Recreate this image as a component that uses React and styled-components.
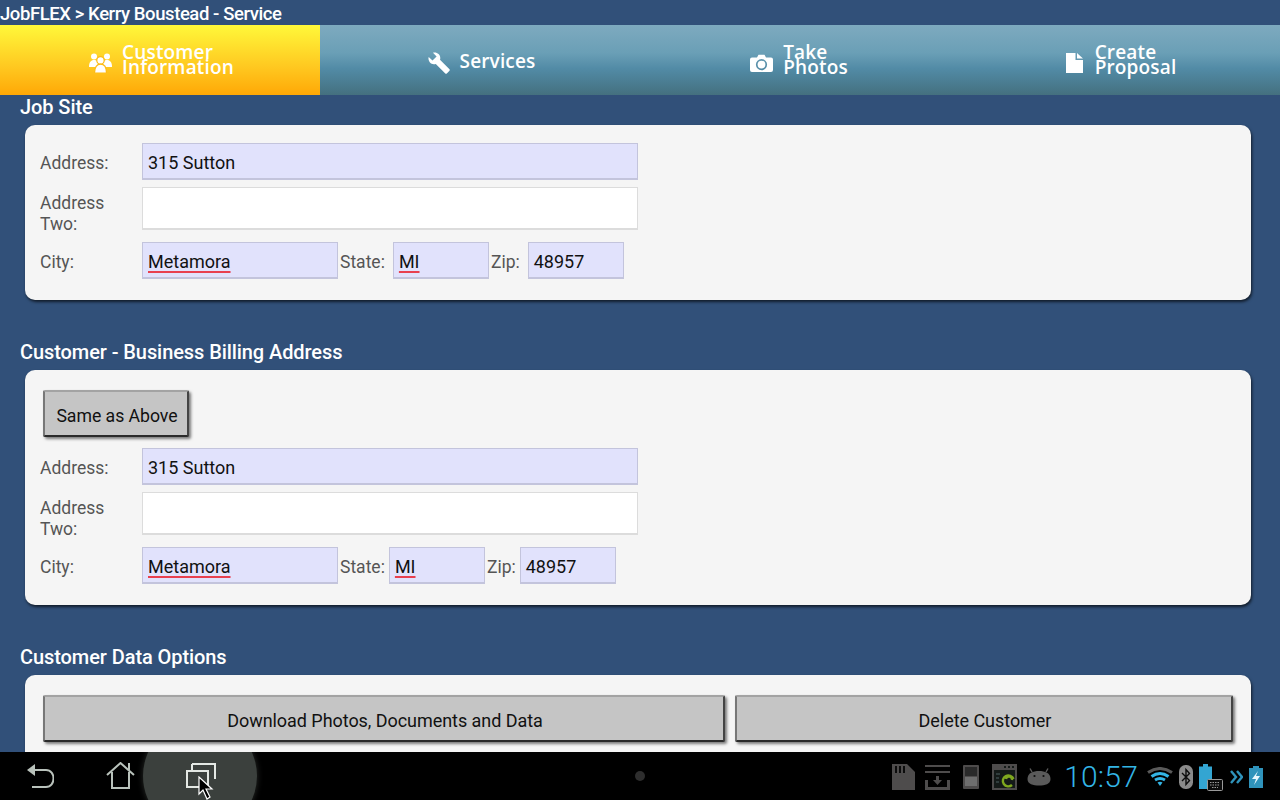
import React from "react";
import styled, { createGlobalStyle } from "styled-components";

const Global = createGlobalStyle`
  html, body { margin: 0; padding: 0; background: #315079; }
  * { box-sizing: border-box; }
`;

const Page = styled.div`
  width: 1280px;
  height: 800px;
  display: flex;
  flex-direction: column;
  overflow: hidden;
  background: #315079;
  font-family: Roboto, "Liberation Sans", sans-serif;
`;

const TitleBar = styled.div`
  height: 25px;
  flex: none;
  color: #fff;
  font-size: 18.5px;
  font-weight: 500;
  line-height: 28px;
  letter-spacing: -0.42px;
  white-space: nowrap;
`;

const Tabs = styled.div`
  height: 70px;
  flex: none;
  display: grid;
  grid-template-columns: repeat(4, 320px);
`;

const Tab = styled.div`
  display: flex;
  align-items: center;
  justify-content: center;
  gap: ${(p) => p.$gap || 10}px;
  padding: 0 ${(p) => p.$padRight || 0}px 0 ${(p) => p.$padLeft || 0}px;
  color: #fff;
  font-family: "Open Sans", "DejaVu Sans", sans-serif;
  font-size: 19px;
  font-weight: 600;
  line-height: 15px;
  letter-spacing: 0.15px;
  background: ${(p) =>
    p.$active
      ? "linear-gradient(#fff83a, #ffc820 60%, #ffa806)"
      : "linear-gradient(#7eaabf, #6a9fb6 40%, #528ba6 62%, #44707f)"};
  svg { flex: none; margin-top: 6px; }
`;

const TabLabel = styled.span`
  white-space: pre-line;
  padding-top: ${(p) => (p.$two ? 0 : 2)}px;
`;

const Content = styled.div`
  flex: 1;
  min-height: 0;
  overflow: hidden;
  padding: 0 29px 0 25px;
`;

const SectionTitle = styled.h2`
  margin: 0 0 0 -5px;
  height: 30px;
  color: #fff;
  font-size: 20px;
  font-weight: 500;
  line-height: 25px;
  letter-spacing: -0.08px;
`;

const Card = styled.div`
  background: #f5f5f5;
  border-radius: 10px;
  padding: 18px 18px 21px 15px;
  box-shadow: 1px 2px 3px rgba(0, 0, 0, 0.65);
  margin-bottom: ${(p) => p.$bottom || 0}px;
`;

const Row = styled.div`
  display: flex;
  align-items: center;
  height: ${(p) => p.$height || 37}px;
  margin-bottom: ${(p) => p.$bottom || 0}px;
`;

const Label = styled.div`
  color: #555;
  font-size: 17.5px;
  line-height: 21px;
  flex: none;
  padding-top: ${(p) => p.$top ?? 4}px;
  width: ${(p) => p.$width || "auto"};
  margin-right: ${(p) => p.$right || 0}px;
`;

const Field = styled.div`
  flex: none;
  width: ${(p) => p.$width}px;
  height: ${(p) => p.$height || 37}px;
  margin-right: ${(p) => p.$right || 0}px;
  padding-left: 5px;
  background: ${(p) => (p.$empty ? "#fff" : "#e1e2fc")};
  border: 1px solid ${(p) => (p.$empty ? "#dcdcdc" : "#c3c4dc")};
  border-bottom-width: 2px;
  color: #111;
  font-size: 18px;
  line-height: 37px;
`;

const Misspelled = styled.span`
  text-decoration: underline #e8404f 2px;
  text-underline-offset: 3px;
  text-decoration-skip-ink: none;
`;

const GreyButton = styled.div`
  height: 47px;
  width: ${(p) => p.$width}px;
  flex: none;
  display: flex;
  align-items: center;
  justify-content: center;
  padding: 4px 0 0 2px;
  background: #c5c5c5;
  border: 2px solid #a5a5a5;
  border-color: #a3a3a3 #444 #2a2a2a #777;
  border-radius: 2px;
  box-shadow: 2px 2px 3px rgba(0, 0, 0, 0.5);
  color: #111;
  font-size: ${(p) => p.$size || 18}px;
  letter-spacing: -0.05px;
`;

const ButtonRow = styled.div`
  display: flex;
  gap: 10px;
  margin: 2px 0 0 3px;
`;

const SameRow = styled.div`
  margin: 2px 0 11px 3px;
`;

const NavBar = styled.div`
  position: relative;
  height: 48px;
  flex: none;
  display: flex;
  align-items: center;
  background: #000;
  overflow: hidden;
`;

const Glow = styled.div`
  position: absolute;
  left: 143px;
  top: -33px;
  width: 114px;
  height: 114px;
  border-radius: 50%;
  background: #3b403d;
  box-shadow: 0 0 6px #2a2d2b;
`;

const NavButtons = styled.div`
  position: relative;
  display: flex;
  align-items: center;
  padding-left: 27px;
  svg { display: block; flex: none; }
`;

const NavGap = styled.div`
  width: ${(p) => p.$w}px;
  flex: none;
`;

const Dot = styled.div`
  position: absolute;
  left: 635px;
  top: 19px;
  width: 10px;
  height: 10px;
  border-radius: 50%;
  background: #2e2e2e;
`;

const Tray = styled.div`
  margin-left: auto;
  display: flex;
  align-items: center;
  height: 100%;
  padding: 2px 17px 0 0;
  svg { display: block; flex: none; }
`;

const Clock = styled.span`
  color: #33b5e5;
  font-size: 30px;
  font-weight: 300;
  letter-spacing: 0.2px;
  line-height: 46px;
  margin: 0 9px 0 13px;
`;

const Cursor = styled.svg`
  position: absolute;
  left: 198px;
  top: 24px;
`;

const UsersIcon = () => (
  <svg width="23" height="20" viewBox="0 0 23 20" fill="#fff">
    <circle cx="5" cy="3.4" r="3" />
    <path d="M0 14 C0 9 2 7 5 7 C8 7 10 9 10 14 Z" />
    <circle cx="18" cy="3.4" r="3" />
    <path d="M13 14 C13 9 15 7 18 7 C21 7 23 9 23 14 Z" />
    <g stroke="#fdbb16" strokeWidth="1.2">
      <circle cx="11.5" cy="7.4" r="3.7" />
      <path d="M5.5 20 C5.5 14 8 11.2 11.5 11.2 C15 11.2 17.5 14 17.5 20 Z" />
    </g>
  </svg>
);

const WrenchIcon = () => (
  <svg width="22" height="22" viewBox="0 0 22 22" fill="#fff">
    <path d="M5 0.7 C9 -0.5 13.5 3 12 7.8 L21.5 17.3 Q22 18 21.5 18.7 L18.8 21.4 Q18 22 17.3 21.4 L7.8 12 C3 13.5 -0.5 9 0.7 5 L4.5 8.6 L8.6 4.5 Z" />
  </svg>
);

const CameraIcon = () => (
  <svg width="23" height="18" viewBox="0 0 23 18" fill="#fff">
    <path
      fillRule="evenodd"
      d="M2 3.5 H7 L8.5 0.7 H14.5 L16 3.5 H21 Q23 3.5 23 5.5 V16 Q23 18 21 18 H2 Q0 18 0 16 V5.5 Q0 3.5 2 3.5 Z M11.5 5 A5.6 5.6 0 1 0 11.5 16.2 A5.6 5.6 0 1 0 11.5 5 Z"
    />
    <circle cx="11.5" cy="10.6" r="3.9" />
  </svg>
);

const FileIcon = () => (
  <svg width="17" height="20" viewBox="0 0 17 20" fill="#fff">
    <path d="M0 0 H9.5 V7 H17 V20 H0 Z" />
    <path d="M11 0 L17 5.6 H11 Z" />
  </svg>
);

const BackIcon = () => (
  <svg width="27" height="26" viewBox="0 0 27 26" fill="none">
    <path d="M0 7 L8 1 V13 Z" fill="#b9c2bb" />
    <path d="M7 7 H19 C29 7 29 24 19 24 H5" stroke="#b9c2bb" strokeWidth="2" />
  </svg>
);

const HomeIcon = () => (
  <svg width="29" height="28" viewBox="0 0 29 28" fill="none" stroke="#b9c2bb" strokeWidth="2">
    <path d="M1 13 L14.5 1 L28 13" />
    <path d="M6 10 V26 H23 V10" />
    <path d="M23 1 V8" />
  </svg>
);

const RecentsIcon = () => (
  <svg width="30" height="26" viewBox="0 0 30 26" fill="none" stroke="#e4e8e4" strokeWidth="2">
    <path d="M6 1 H29 V16 M6 1 V7" />
    <rect x="1" y="8" width="21" height="16" />
  </svg>
);

const SdIcon = () => (
  <svg width="23" height="26" viewBox="0 0 23 26" fill="#4e4c4c">
    <path d="M0 0 H15 L23 8 V26 H0 Z" />
    <path d="M3 2 H5 V9 H3 Z M7 2 H9 V9 H7 Z M11 2 H13 V9 H11 Z" fill="#0c0c0c" />
  </svg>
);

const DownloadIcon = () => (
  <svg width="25" height="26" viewBox="0 0 25 26" fill="none" stroke="#4e4c4c">
    <path d="M0 2 H25 M0 8 H25" strokeWidth="2" />
    <path d="M1.5 16 V24.5 H23.5 V16" strokeWidth="3" />
    <path d="M12.5 12 V18" strokeWidth="3" />
    <path d="M8 16 H17 L12.5 21 Z" fill="#4e4c4c" stroke="none" />
  </svg>
);

const PhoneIcon = () => (
  <svg width="16" height="24" viewBox="0 0 16 24">
    <rect x="0" y="0" width="16" height="24" rx="1" fill="#4e4c4c" />
    <rect x="2" y="2" width="12" height="9" fill="#2a2a2a" />
    <rect x="2" y="12" width="12" height="9" fill="#6e6e6e" />
  </svg>
);

const AppThumbIcon = () => (
  <svg width="25" height="26" viewBox="0 0 25 26" fill="none">
    <rect x="0" y="0" width="25" height="26" fill="#4e4c4c" />
    <rect x="2" y="6" width="21" height="18" fill="#141a18" />
    <path d="M21.5 15 A5.5 5.5 0 1 0 20 21 M14 15 A3 3 0 0 1 20 16" stroke="#7fa81f" strokeWidth="2.4" />
    <path d="M4 10 H8 M4 14 H7 M4 18 H7" stroke="#3a4a4a" strokeWidth="1.5" />
    <path d="M12 3 H14 M16 3 H18 M20 3 H22" stroke="#141a18" strokeWidth="2" />
  </svg>
);

const AndroidIcon = () => (
  <svg width="24" height="18" viewBox="0 0 24 18" fill="#5a5a5a">
    <path d="M0.5 11 C0.5 5 6 3 12 3 C18 3 23.5 5 23.5 11 C23.5 16 18 17.5 12 17.5 C6 17.5 0.5 16 0.5 11 Z" />
    <path d="M5 4 L3 0.5 M19 4 L21 0.5" stroke="#5a5a5a" strokeWidth="1.4" />
    <circle cx="7.5" cy="8" r="1.1" fill="#0c0c0c" />
    <circle cx="16.5" cy="8" r="1.1" fill="#0c0c0c" />
  </svg>
);

const WifiIcon = () => (
  <svg width="26" height="20" viewBox="0 0 26 20" fill="none" strokeWidth="3">
    <path d="M1 5.5 Q13 -2.5 25 5.5" stroke="#5a5a5a" />
    <path d="M4.5 9.5 Q13 3.5 21.5 9.5" stroke="#33b5e5" />
    <path d="M8 13 Q13 10 18 13" stroke="#33b5e5" />
    <path d="M10.5 15.5 Q13 14 15.5 15.5 L13 19 Z" fill="#33b5e5" />
  </svg>
);

const BluetoothIcon = () => (
  <svg width="14" height="24" viewBox="0 0 14 24">
    <rect x="0" y="0" width="14" height="24" rx="6.5" fill="#8a8a8a" />
    <path d="M3 8 L10.5 15.5 L7 19.5 V4.5 L10.5 8.5 L3 16" fill="none" stroke="#0c0c0c" strokeWidth="1.4" />
  </svg>
);

const KeyboardBatteryIcon = () => (
  <svg width="24" height="27" viewBox="0 0 24 27">
    <path d="M0 2.5 H4 V0 H9 V2.5 H13 V25 H0 Z" fill="#33a5d2" />
    <rect x="8.5" y="15.5" width="15" height="11" rx="1" fill="#0c0c0c" stroke="#9a9a9a" />
    <path d="M11 18.5 H21 M11 21 H21 M13 23.5 H19" stroke="#9a9a9a" strokeWidth="1.2" strokeDasharray="1.5 1" />
  </svg>
);

const ChevronsIcon = () => (
  <svg width="13" height="14" viewBox="0 0 13 14" fill="none" stroke="#2f93bb" strokeWidth="2.4">
    <path d="M1 1 L6 7 L1 13 M7 1 L12 7 L7 13" />
  </svg>
);

const ChargingIcon = () => (
  <svg width="14" height="22" viewBox="0 0 14 22">
    <path d="M4 0 H10 V2 H14 V22 H0 V2 H4 Z" fill="#2f93bb" />
    <path d="M9 5 L3 13 H7 L5 19 L11 10 H7 Z" fill="#e8f7fd" />
  </svg>
);

const Address = ({ stateGap, zipGap }) => (
  <>
    <Row $bottom={7}>
      <Label $width="102px">Address:</Label>
      <Field $width={496}>315 Sutton</Field>
    </Row>
    <Row $height={43} $bottom={12}>
      <Label $width="102px" $top={10}>
        Address
        <br />
        Two:
      </Label>
      <Field $width={496} $height={43} $empty />
    </Row>
    <Row>
      <Label $width="102px">City:</Label>
      <Field $width={196} $right={2}>
        <Misspelled>Metamora</Misspelled>
      </Field>
      <Label $right={stateGap}>State:</Label>
      <Field $width={96} $right={2}>
        <Misspelled>MI</Misspelled>
      </Field>
      <Label $right={zipGap}>Zip:</Label>
      <Field $width={96}>48957</Field>
    </Row>
  </>
);

export default function App() {
  return (
    <Page>
      <Global />
      <TitleBar>JobFLEX &gt; Kerry Boustead - Service</TitleBar>
      <Tabs>
        <Tab $active $padLeft={3}>
          <UsersIcon />
          <TabLabel $two>{"Customer\nInformation"}</TabLabel>
        </Tab>
        <Tab $padLeft={3}>
          <WrenchIcon />
          <TabLabel>Services</TabLabel>
        </Tab>
        <Tab $padRight={2}>
          <CameraIcon />
          <TabLabel $two>{"Take\nPhotos"}</TabLabel>
        </Tab>
        <Tab $gap={12} $padLeft={2}>
          <FileIcon />
          <TabLabel $two>{"Create\nProposal"}</TabLabel>
        </Tab>
      </Tabs>
      <Content>
        <SectionTitle>Job Site</SectionTitle>
        <Card $bottom={40}>
          <Address stateGap={8} zipGap={8} />
        </Card>
        <SectionTitle>Customer - Business Billing Address</SectionTitle>
        <Card $bottom={40}>
          <SameRow>
            <GreyButton $width={146} $size={17.7}>Same as Above</GreyButton>
          </SameRow>
          <Address stateGap={4} zipGap={4} />
        </Card>
        <SectionTitle>Customer Data Options</SectionTitle>
        <Card>
          <ButtonRow>
            <GreyButton $width={682}>Download Photos, Documents and Data</GreyButton>
            <GreyButton $width={498}>Delete Customer</GreyButton>
          </ButtonRow>
        </Card>
      </Content>
      <NavBar>
        <Glow />
        <NavButtons>
          <BackIcon />
          <NavGap $w={52} />
          <HomeIcon />
          <NavGap $w={51} />
          <RecentsIcon />
        </NavButtons>
        <Dot />
        <Tray>
          <SdIcon />
          <NavGap $w={10} />
          <DownloadIcon />
          <NavGap $w={13} />
          <PhoneIcon />
          <NavGap $w={13} />
          <AppThumbIcon />
          <NavGap $w={10} />
          <AndroidIcon />
          <Clock>10:57</Clock>
          <WifiIcon />
          <NavGap $w={6} />
          <BluetoothIcon />
          <NavGap $w={6} />
          <KeyboardBatteryIcon />
          <NavGap $w={7} />
          <ChevronsIcon />
          <NavGap $w={6} />
          <ChargingIcon />
        </Tray>
        <Cursor width="16" height="24" viewBox="0 0 16 24">
          <path d="M1 1 V18 L5 14 L9 23 L12 21 L8 13 H14 Z" fill="#000" stroke="#fff" strokeWidth="1.2" />
        </Cursor>
      </NavBar>
    </Page>
  );
}
